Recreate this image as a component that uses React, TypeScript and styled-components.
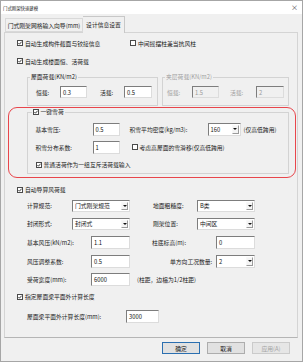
import React from "react";
import styled, { createGlobalStyle } from "styled-components";

const Global = createGlobalStyle`
  html, body { margin: 0; padding: 0; background: #f0f0f0; }
  body {
    font-family: "Noto Sans CJK SC", "Noto Sans", sans-serif;
    font-size: 5.8px;
    color: #1a1a1a;
  }
  * { box-sizing: border-box; }
`;

const Dialog = styled.div`
  width: 303px;
  height: 362px;
  border: 1px solid #a6a6a6;
  background: #f0f0f0;
  display: flex;
  flex-direction: column;
  overflow: hidden;
`;

const TitleBar = styled.div`
  height: 13px;
  background: #ffffff;
  display: flex;
  align-items: center;
  justify-content: space-between;
  padding: 0 4px 0 2px;
  font-size: 4.4px;
  color: #222;
`;

const Close = styled.span`
  font-size: 7px;
  line-height: 7px;
  color: #444;
`;

const Body = styled.div`
  padding: 2px 4px 0 3px;
  display: flex;
  flex-direction: column;
`;

const TabRow = styled.div`
  height: 16px;
  display: flex;
  align-items: flex-end;
  padding-left: 1px;
`;

const Tab = styled.div<{ $active?: boolean; $w: number }>`
  width: ${(p) => p.$w}px;
  height: ${(p) => (p.$active ? 17 : 14)}px;
  margin-bottom: ${(p) => (p.$active ? -1 : 0)}px;
  position: relative;
  z-index: ${(p) => (p.$active ? 1 : 0)};
  border: 1px solid ${(p) => (p.$active ? "#c8c8c8" : "#d9d9d9")};
  border-bottom: ${(p) => (p.$active ? "none" : "1px solid #d9d9d9")};
  border-left: ${(p) => (p.$active ? "none" : "1px solid #d9d9d9")};
  background: #f0f0f0;
  display: flex;
  align-items: center;
  justify-content: center;
  padding-bottom: ${(p) => (p.$active ? 2 : 0)}px;
  white-space: nowrap;
`;

const Panel = styled.div`
  height: 306px;
  border: 1px solid #d4d4d4;
  border-bottom-color: #b5b5b5;
  padding-top: 4px;
  display: flex;
  flex-direction: column;
`;

const Row = styled.div<{ $h: number; $mt?: number; $ml?: number }>`
  display: flex;
  align-items: center;
  height: ${(p) => p.$h}px;
  margin-top: ${(p) => p.$mt ?? 0}px;
  margin-left: ${(p) => p.$ml ?? 0}px;
  flex: none;
  white-space: nowrap;
`;

const Cell = styled.div<{ $w: number; $pl?: number }>`
  width: ${(p) => p.$w}px;
  padding-left: ${(p) => p.$pl ?? 0}px;
  flex: none;
  display: flex;
  align-items: center;
  height: 100%;
`;

const Gap = styled.div<{ $w: number }>`
  width: ${(p) => p.$w}px;
  flex: none;
`;

const Note = styled.span`
  white-space: nowrap;
`;

const CheckWrap = styled.label<{ $w?: number }>`
  display: flex;
  align-items: center;
  gap: 2px;
  width: ${(p) => (p.$w ? `${p.$w}px` : "auto")};
  flex: none;
  white-space: nowrap;
`;

const Box = styled.span`
  width: 6px;
  height: 6px;
  border: 1px solid #4a4a4a;
  background: #fff;
  display: flex;
  align-items: center;
  justify-content: center;
  flex: none;
`;

const Check: React.FC<{ checked?: boolean; children: React.ReactNode; w?: number }> = ({
  checked,
  children,
  w,
}) => (
  <CheckWrap $w={w}>
    <Box>
      {checked && (
        <svg width="4" height="4" viewBox="0 0 4 4">
          <path d="M0.4 2 L1.5 3.2 L3.6 0.7" stroke="#111" strokeWidth="0.8" fill="none" />
        </svg>
      )}
    </Box>
    <span>{children}</span>
  </CheckWrap>
);

const TextBox = styled.div<{ $w: number; $disabled?: boolean }>`
  width: ${(p) => p.$w}px;
  height: 100%;
  flex: none;
  background: ${(p) => (p.$disabled ? "#f0f0f0" : "#ffffff")};
  color: ${(p) => (p.$disabled ? "#9a9a9a" : "#111")};
  border-style: solid;
  border-width: 1px;
  border-color: #7d7d7d #dcdcdc #dcdcdc #7d7d7d;
  padding: 1px 0 0 2px;
  display: flex;
  align-items: flex-start;
`;

const SelectBox = styled.div<{ $w: number }>`
  width: ${(p) => p.$w}px;
  height: 100%;
  flex: none;
  background: #fff;
  border-style: solid;
  border-width: 1px;
  border-color: #7d7d7d #dcdcdc #dcdcdc #7d7d7d;
  display: flex;
  align-items: stretch;
`;

const SelectText = styled.div`
  flex: 1;
  padding-left: 2px;
  display: flex;
  align-items: center;
`;

const SelectArrow = styled.div`
  width: 7px;
  margin: 1px;
  background: #f4f4f4;
  border: 1px solid #d0d0d0;
  border-color: #f8f8f8 #9a9a9a #9a9a9a #f8f8f8;
  display: flex;
  align-items: center;
  justify-content: center;
  &::after {
    content: "";
    border-left: 2px solid transparent;
    border-right: 2px solid transparent;
    border-top: 2px solid #111;
  }
`;

const Select: React.FC<{ w: number; value: string }> = ({ w, value }) => (
  <SelectBox $w={w}>
    <SelectText>{value}</SelectText>
    <SelectArrow />
  </SelectBox>
);

const GroupRow = styled.div`
  display: flex;
  gap: 4px;
  margin-left: 22px;
  margin-top: 6px;
`;

const Group = styled.fieldset<{ $w: number; $disabled?: boolean; $pb: number }>`
  margin: 0;
  padding: 0 0 ${(p) => p.$pb}px 0;
  min-width: 0;
  width: ${(p) => p.$w}px;
  border: 1px solid #d3d3d3;
  color: ${(p) => (p.$disabled ? "#a0a0a0" : "inherit")};
`;

const Legend = styled.legend<{ $ml: number }>`
  margin-left: ${(p) => p.$ml}px;
  padding: 0 1px;
  height: 8px;
  line-height: 8px;
  display: flex;
  align-items: center;
`;

const Annotation = styled.div`
  margin: 1px 0 0 3px;
  width: 288px;
  border: 1.5px solid #e8464c;
  border-radius: 9px;
  padding: 0 6px 3px 17.5px;
`;

const Footer = styled.div`
  display: flex;
  justify-content: flex-end;
  gap: 7px;
  padding: 4px 12px 0 0;
`;

const Button = styled.div<{ $primary?: boolean; $disabled?: boolean }>`
  width: 38px;
  height: 12px;
  display: flex;
  align-items: center;
  justify-content: center;
  background: ${(p) => (p.$disabled ? "#e6e6e6" : "#e1e1e1")};
  border: 1px solid ${(p) => (p.$primary ? "#2b6fb0" : p.$disabled ? "#cbcbcb" : "#adadad")};
  color: ${(p) => (p.$disabled ? "#a3a3a3" : "#1a1a1a")};
`;

export default function App() {
  return (
    <>
      <Global />
      <Dialog>
        <TitleBar>
          <span>门式刚架快速建模</span>
          <Close>×</Close>
        </TitleBar>
        <Body>
          <TabRow>
            <Tab $w={78}>门式刚架网格输入向导(mm)</Tab>
            <Tab $w={42} $active>
              设计信息设置
            </Tab>
          </TabRow>
          <Panel>
            <Row $h={12} $ml={12}>
              <Check checked w={113}>
                自动生成构件截面与铰接信息
              </Check>
              <Check>中间摇摆柱兼当抗风柱</Check>
            </Row>
            <Row $h={12} $mt={6} $ml={12}>
              <Check checked>自动生成楼面恒、活荷载</Check>
            </Row>
            <GroupRow>
              <Group $w={131} $pb={7}>
                <Legend $ml={2}>屋面荷载(KN/m2)</Legend>
                <Row $h={12} $mt={5} $ml={8}>
                  <Cell $w={24}>恒载:</Cell>
                  <TextBox $w={27}>0.3</TextBox>
                  <Gap $w={13} />
                  <Cell $w={24}>活载:</Cell>
                  <TextBox $w={28}>0.5</TextBox>
                </Row>
              </Group>
              <Group $w={127} $pb={7} $disabled>
                <Legend $ml={2}>夹层荷载(KN/m2)</Legend>
                <Row $h={12} $mt={5} $ml={4}>
                  <Cell $w={25}>恒载:</Cell>
                  <TextBox $w={27} $disabled>
                    1.5
                  </TextBox>
                  <Gap $w={11} />
                  <Cell $w={26}>活载:</Cell>
                  <TextBox $w={28} $disabled>
                    2
                  </TextBox>
                </Row>
              </Group>
            </GroupRow>
            <Annotation>
              <Group $w={262} $pb={3}>
                <Legend $ml={4}>
                  <Check checked>一键雪荷</Check>
                </Legend>
                <Row $h={13} $mt={6.5} $ml={8}>
                  <Cell $w={57}>基本雪压:</Cell>
                  <TextBox $w={27}>0.5</TextBox>
                  <Gap $w={10} />
                  <Cell $w={78}>积雪平均密度(kg/m3):</Cell>
                  <Select w={33} value="160" />
                  <Gap $w={3} />
                  <Note>(仅高低跨用)</Note>
                </Row>
                <Row $h={13} $mt={5} $ml={8}>
                  <Cell $w={57}>积雪分布系数:</Cell>
                  <TextBox $w={27}>1</TextBox>
                  <Gap $w={12} />
                  <Check>考虑高屋面的雪滑移(仅高低跨用)</Check>
                </Row>
                <Row $h={10} $mt={6} $ml={8}>
                  <Check checked>普通活荷作为一组互斥活荷载输入</Check>
                </Row>
              </Group>
            </Annotation>
            <Row $h={12} $mt={6} $ml={12}>
              <Check checked>自动导算风荷载</Check>
            </Row>
            <Row $h={12} $mt={4} $ml={22}>
              <Cell $w={45}>计算规范:</Cell>
              <Select w={58} value="门式刚架规范" />
              <Gap $w={23} />
              <Cell $w={44}>地面粗糙度:</Cell>
              <Select w={58} value="B类" />
            </Row>
            <Row $h={12} $mt={6} $ml={22}>
              <Cell $w={45}>封闭形式:</Cell>
              <Select w={58} value="封闭式" />
              <Gap $w={23} />
              <Cell $w={44}>刚架位置:</Cell>
              <Select w={58} value="中间区" />
            </Row>
            <Row $h={13} $mt={6} $ml={22}>
              <Cell $w={64}>基本风压(kN/m2):</Cell>
              <TextBox $w={39}>1.1</TextBox>
              <Gap $w={22} />
              <Cell $w={64}>柱底标高(m):</Cell>
              <TextBox $w={39}>0</TextBox>
            </Row>
            <Row $h={13} $mt={6} $ml={22}>
              <Cell $w={64}>风压调整系数:</Cell>
              <TextBox $w={39}>0.5</TextBox>
              <Gap $w={22} />
              <Cell $w={64} $pl={18}>
                单方向工况数量:
              </Cell>
              <Select w={39} value="2" />
            </Row>
            <Row $h={13} $mt={5} $ml={22}>
              <Cell $w={64}>受荷宽度(mm):</Cell>
              <TextBox $w={39}>6000</TextBox>
              <Gap $w={7} />
              <Note>(柱距，边榀为1/2柱距)</Note>
            </Row>
            <Row $h={10} $mt={6} $ml={12}>
              <Check checked>指定屋面梁平面外计算长度</Check>
            </Row>
            <Row $h={13} $mt={8} $ml={22}>
              <Cell $w={99}>屋面梁平面外计算长度(mm):</Cell>
              <TextBox $w={33}>3000</TextBox>
            </Row>
          </Panel>
        </Body>
        <Footer>
          <Button $primary>确定</Button>
          <Button>取消</Button>
          <Button $disabled>应用(A)</Button>
        </Footer>
      </Dialog>
    </>
  );
}
